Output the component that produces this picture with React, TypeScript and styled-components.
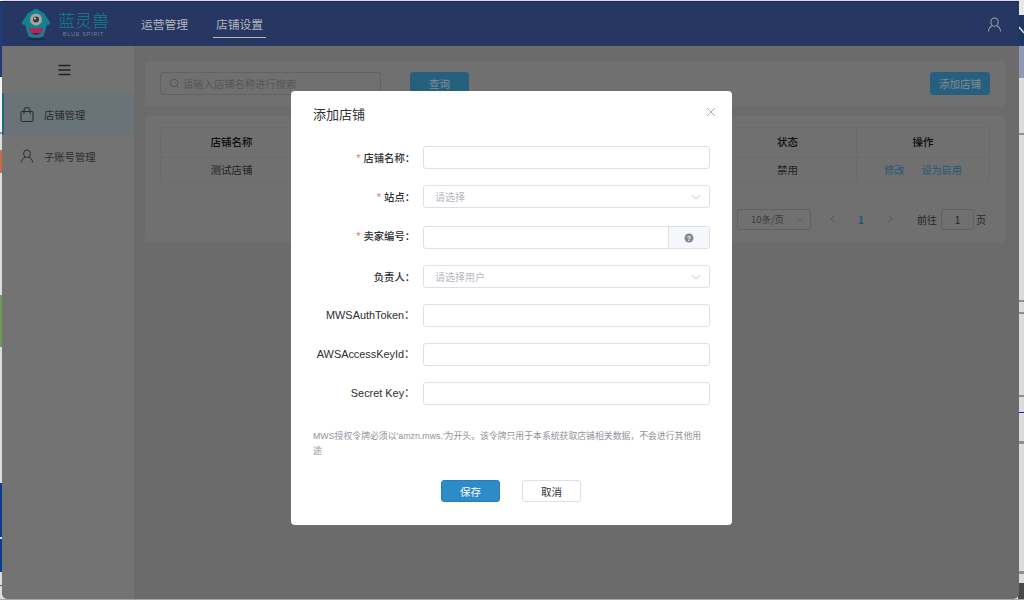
import React from "react";
import styled, { createGlobalStyle } from "styled-components";

const Global = createGlobalStyle`
  html, body { margin: 0; padding: 0; width: 1024px; height: 600px; overflow: hidden; background: #d8d8d8; }
  * { box-sizing: border-box; }
  body { font-family: "Liberation Sans", "Noto Sans CJK SC", sans-serif; }
`;

const Desktop = styled.div`
  position: relative;
  width: 1024px;
  height: 600px;
  overflow: hidden;
  background: #dcdcdc;
`;
const LeftStrip = styled.div`
  position: absolute;
  left: 0;
  width: 3px;
  top: ${p => p.$top}px;
  height: ${p => p.$h}px;
  background: ${p => p.$c};
`;
const RightStrip = styled.div`
  position: absolute;
  right: 0;
  width: 6px;
  top: ${p => p.$top}px;
  height: ${p => p.$h}px;
  background: ${p => p.$c};
`;
const RightGlyph = styled.svg`
  position: absolute;
  right: 0;
  top: 24px;
`;
const TopEdge = styled.div`
  position: absolute;
  left: 0;
  top: 1px;
  width: 1019px;
  height: 1px;
  background: #20245e;
`;
const BottomEdge = styled.div`
  position: absolute;
  left: 0;
  right: 0;
  bottom: 0;
  height: 1px;
  background: #a6a6a6;
`;
const Window = styled.div`
  position: absolute;
  left: 2px;
  top: 2px;
  width: 1017px;
  height: 597px;
  border-radius: 0 0 6px 6px;
  overflow: hidden;
  display: flex;
  flex-direction: column;
  background: #6b6b6b;
`;
const Header = styled.header`
  height: 44px;
  flex: none;
  background: #273763;
  display: flex;
  align-items: center;
  padding: 0 17px 0 19px;
`;
const Logo = styled.div`
  display: flex;
  align-items: center;
  width: 117px;
  gap: 7px;
`;
const LogoText = styled.div`
  display: flex;
  flex-direction: column;
  align-items: center;
  width: 51px;
  color: #12808f;
`;
const LogoCn = styled.div`
  font-size: 17px;
  line-height: 20px;
  font-family: "Noto Sans CJK SC", sans-serif;
  font-weight: 300;
`;
const LogoEn = styled.div`
  font-size: 5.5px;
  line-height: 7px;
  margin-top: 1px;
  letter-spacing: 0.7px;
  white-space: nowrap;
  color: #75819a;
`;
const TopNav = styled.nav`
  display: flex;
  gap: 22px;
  flex: 1;
  height: 100%;
`;
const TopItem = styled.div`
  font-size: 11.8px;
  width: 53px;
  height: 100%;
  display: flex;
  align-items: center;
  justify-content: center;
  padding-bottom: 2px;
  color: #b4b6bd;
  font-family: "Noto Sans CJK SC", sans-serif;
  position: relative;
  ${p => p.$active && `
    &::after {
      content: "";
      position: absolute;
      left: 0;
      right: 0;
      bottom: 8px;
      height: 1px;
      background: #b9b9b4;
    }
  `}
`;
const Body = styled.div`
  flex: 1;
  display: flex;
  min-height: 0;
`;
const Sidebar = styled.aside`
  width: 132px;
  flex: none;
  background: #737373;
  display: flex;
  flex-direction: column;
`;
const Burger = styled.div`
  height: 47px;
  display: flex;
  align-items: center;
  justify-content: center;
  padding: 1px 8px 0 0;
`;
const MenuItem = styled.div`
  height: 42px;
  display: flex;
  align-items: center;
  padding-left: 16px;
  gap: 10px;
  font-size: 10.3px;
  color: #2b2b2b;
  font-family: "Noto Sans CJK SC", sans-serif;
  background: ${p => (p.$active ? "#6a7378" : "transparent")};
  border-left: 2px solid ${p => (p.$active ? "#1d6686" : "transparent")};
`;
const Main = styled.main`
  flex: 1;
  padding: 15px 14px 0 11px;
  display: flex;
  flex-direction: column;
  gap: 10px;
`;
const SearchCard = styled.section`
  background: #707070;
  border-radius: 3px;
  padding: 0 15px;
  height: 45px;
  display: flex;
  align-items: center;
`;
const TableCard = styled.section`
  background: #707070;
  border-radius: 3px;
  padding: 11px 15px 0;
  height: 126px;
`;
const SearchBox = styled.div`
  width: 221px;
  height: 23px;
  border: 1px solid #626262;
  border-radius: 3px;
  display: flex;
  align-items: center;
  padding-left: 8px;
  gap: 3px;
  font-size: 10.3px;
  color: #565656;
  font-family: "Noto Sans CJK SC", sans-serif;
`;
const DimButton = styled.div`
  height: 23px;
  width: ${p => p.$w}px;
  border-radius: 3px;
  background: #27607f;
  color: #838c92;
  display: flex;
  align-items: center;
  justify-content: center;
  font-size: 10.5px;
  font-family: "Noto Sans CJK SC", sans-serif;
  margin-left: ${p => p.$ml || "0"};
`;
const Table = styled.div`
  display: grid;
  grid-template-columns: 142px 1fr 138px 132px;
  grid-template-rows: 30px 24px;
  width: 830px;
  border: 1px solid #6b6b6b;
  border-radius: 2px;
`;
const Cell = styled.div`
  display: flex;
  align-items: center;
  justify-content: center;
  font-size: ${p => (p.$links ? "10.1px" : "10.5px")};
  gap: 17px;
  padding-bottom: ${p => (p.$head ? "3px" : "1px")};
  color: ${p => (p.$head ? "#0c0c0c" : "#222")};
  font-weight: ${p => (p.$head ? 500 : 400)};
  font-family: "Noto Sans CJK SC", sans-serif;
  border-bottom: ${p => (p.$head ? "1px solid #6b6b6b" : "none")};
  border-right: ${p => (p.$last ? "none" : "1px solid #6b6b6b")};
`;
const TableLink = styled.span`
  color: #1d5a78;
`;
const Pager = styled.div`
  display: flex;
  align-items: center;
  justify-content: flex-end;
  height: 24px;
  margin-top: 24px;
  width: 830px;
  font-size: 10px;
  color: #262626;
  font-family: "Noto Sans CJK SC", sans-serif;
`;
const PageSize = styled.div`
  width: 74px;
  height: 21px;
  border: 1px solid #626262;
  border-radius: 3px;
  display: flex;
  align-items: center;
  justify-content: space-between;
  padding: 0 5px 0 13px;
  font-size: 9.4px;
  color: #3a3a3a;
  margin-right: 18px;
`;
const PageNum = styled.span`
  color: #1d5a78;
  font-weight: 700;
  margin: 0 22px 0 21px;
`;
const GoTo = styled.span`
  margin-left: 23px;
`;
const GoBox = styled.div`
  width: 33px;
  height: 21px;
  border: 1px solid #626262;
  border-radius: 3px;
  display: flex;
  align-items: center;
  justify-content: center;
  margin: 0 2px 0 4px;
`;
const PageEnd = styled.span`
  margin-right: 4px;
`;

const Modal = styled.div`
  position: absolute;
  left: 291px;
  top: 91px;
  width: 441px;
  height: 434px;
  background: #fff;
  border-radius: 4px;
  padding: 13px 22px 0;
  display: flex;
  flex-direction: column;
`;
const ModalHead = styled.div`
  display: flex;
  justify-content: space-between;
  align-items: flex-start;
  height: 42px;
`;
const ModalTitle = styled.h2`
  margin: 0;
  font-size: 13px;
  line-height: 20px;
  font-weight: 400;
  color: #303133;
  font-family: "Noto Sans CJK SC", sans-serif;
`;
const CloseBtn = styled.div`
  color: #9a9da3;
  margin: 3px -6px 0 0;
  display: flex;
`;
const Form = styled.div`
  display: flex;
  flex-direction: column;
  gap: 16px;
`;
const Row = styled.div`
  display: flex;
  align-items: center;
  margin-top: ${p => (p.$extra ? "2px" : "0")};
`;
const Label = styled.label`
  width: 102px;
  flex: none;
  text-align: right;
  margin-right: 8px;
  padding-bottom: ${p => (p.$lift ? "4px" : p.$latin ? "3px" : "0")};
  font-size: ${p => (p.$latin ? "10.9px" : "10.3px")};
  font-weight: 500;
  color: #2c2d30;
  white-space: nowrap;
`;
const Star = styled.span`
  color: #f56c6c;
  font-size: 11px;
  margin-right: 3px;
`;
const FieldBox = styled.div`
  width: 287px;
  height: 23px;
  border: 1px solid #dcdfe6;
  border-radius: 3px;
  display: flex;
  align-items: center;
  justify-content: space-between;
  padding-left: 11px;
  padding-right: 7px;
  font-size: 10px;
  color: #b5b8bf;
  font-family: "Noto Sans CJK SC", sans-serif;
`;
const AppendBox = styled.div`
  width: 287px;
  height: 23px;
  border: 1px solid #dcdfe6;
  border-radius: 3px;
  display: flex;
  justify-content: flex-end;
  overflow: hidden;
`;
const Append = styled.div`
  width: 41px;
  background: #f5f7fa;
  border-left: 1px solid #dcdfe6;
  display: flex;
  align-items: center;
  justify-content: center;
`;
const Hint = styled.p`
  margin: 24px 0 0;
  padding-right: 5px;
  font-size: 8.85px;
  line-height: 15px;
  color: #909399;
`;
const Actions = styled.div`
  display: flex;
  justify-content: center;
  gap: 22px;
  margin-top: 21px;
  padding-right: 1px;
`;
const Btn = styled.div`
  width: 59px;
  height: 22px;
  border-radius: 3px;
  display: flex;
  align-items: center;
  justify-content: center;
  font-size: 10.5px;
  font-family: "Noto Sans CJK SC", sans-serif;
  background: ${p => (p.$primary ? "#2d8cc8" : "#fff")};
  color: ${p => (p.$primary ? "#fff" : "#303133")};
  border: 1px solid ${p => (p.$primary ? "#2a7fb8" : "#dcdfe6")};
`;

const Chevron = ({ c = "#c0c4cc", s = 12 }: { c?: string; s?: number }) => (
  <svg width={s} height={s} viewBox="0 0 12 12" fill="none" stroke={c} strokeWidth="0.9">
    <path d="M2 4.200 6 8l4-3.800" />
  </svg>
);
const Person = ({ c, s }: { c: string; s: number }) => (
  <svg width={s} height={s} viewBox="0 0 16 16" fill="none" stroke={c} strokeWidth="1.100">
    <ellipse cx="8" cy="5.400" rx="3.900" ry="4.400" />
    <path d="M1.500 15.500c.4-3.600 2.800-5.800 4.300-6.200M14.500 15.500c-.4-3.600-2.800-5.800-4.300-6.200" />
  </svg>
);
const Bag = () => (
  <svg width="14" height="15" viewBox="0 0 14 15" fill="none" stroke="#2b2b2b" strokeWidth="1">
    <path d="M1.500 4.500h11a.5.5 0 0 1 .5.5v8.500a1 1 0 0 1-1 1H2a1 1 0 0 1-1-1V5a.5.5 0 0 1 .5-.5z" />
    <path d="M4 7V3a3 2.500 0 0 1 6 0v4" />
  </svg>
);
const Monster = () => (
  <svg width="30" height="33" viewBox="0 0 30 33">
    <ellipse cx="15" cy="31" rx="10" ry="1.400" fill="#1e2c50" />
    <path d="M15 1c2.500 0 3 1.600 5 2.400 2 .8 3.600 1.600 4.600 4.200.7 2 4 5 4.400 7.200.3 1.700-2.200 2.400-3.600 2.800-.4 3.600-1.600 8-3.400 10.600-1.800 2-12.200 2-14 0C6.200 25.600 5 21.200 4.600 17.600 3.200 17.200.7 16.500 1 14.800c.4-2.200 3.700-5.200 4.400-7.200 1-2.600 2.600-3.400 4.600-4.200C12 2.600 12.500 1 15 1z" fill="#177f90" />
    <circle cx="15" cy="11.600" r="6" fill="#a4a4a0" />
    <circle cx="15" cy="11.600" r="3" fill="#3a3a3a" />
    <circle cx="14" cy="10.600" r="1" fill="#d8d8d8" />
    <path d="M8 20h14c0 4-2.800 7-7 7s-7-3-7-7z" fill="#a62a5e" />
    <path d="M11 25.500c2-.9 6-.9 8 0-2 1.700-6 1.700-8 0z" fill="#5a1c4c" />
  </svg>
);

const fields: { label: string; req?: boolean; kind?: "select" | "append"; ph?: string; extra?: boolean; latin?: boolean }[] = [
  { label: "店铺名称：", req: true },
  { label: "站点：", req: true, kind: "select", ph: "请选择" },
  { label: "卖家编号：", req: true, kind: "append", extra: true },
  { label: "负责人：", kind: "select", ph: "请选择用户" },
  { label: "MWSAuthToken：", latin: true },
  { label: "AWSAccessKeyId：", latin: true },
  { label: "Secret Key：", latin: true },
];

const leftBits: [number, number, string][] = [
  [0, 1, "#ffffff"],
  [2, 75, "#1f3a78"],
  [77, 55, "#f4f4f4"],
  [132, 2, "#8f8f8f"],
  [150, 23, "#c9694a"],
  [295, 52, "#6f9a5c"],
  [483, 54, "#0b3d8e"],
  [539, 33, "#0b3d8e"],
  [585, 1, "#a83a3a"],
];
const rightBits: [number, number, string][] = [
  [0, 15, "#e8e8e8"],
  [15, 31, "#1f3565"],
  [46, 32, "#8f99b4"],
  [133, 2, "#8f8f8f"],
  [300, 2, "#8f8f8f"],
  [312, 2, "#8f8f8f"],
  [395, 2, "#8f8f8f"],
  [412, 1, "#1a237e"],
  [441, 3, "#8f8f8f"],
  [571, 3, "#8f8f8f"],
  [583, 17, "#4a4a4a"],
];

export default function App() {
  return (
    <Desktop>
      <Global />
      {leftBits.map(([t, h, c]) => (
        <LeftStrip key={t} $top={t} $h={h} $c={c} />
      ))}
      {rightBits.map(([t, h, c]) => (
        <RightStrip key={t} $top={t} $h={h} $c={c} />
      ))}
      <RightGlyph width="5" height="14" viewBox="0 0 5 14" fill="none" stroke="#d8dbe4" strokeWidth="1.500">
        <path d="M0 3 5 9" />
      </RightGlyph>
      <TopEdge />
      <BottomEdge />
      <Window>
        <Header>
          <Logo>
            <Monster />
            <LogoText>
              <LogoCn>蓝灵兽</LogoCn>
              <LogoEn>BLUE SPIRIT</LogoEn>
            </LogoText>
          </Logo>
          <TopNav>
            <TopItem>运营管理</TopItem>
            <TopItem $active>店铺设置</TopItem>
          </TopNav>
          <Person c="#9a9fad" s={15} />
        </Header>
        <Body>
          <Sidebar>
            <Burger>
              <svg width="13" height="12" viewBox="0 0 13 12" stroke="#222" strokeWidth="1.300">
                <path d="M.5 1.500h12M.5 6h12M.5 10.500h12" />
              </svg>
            </Burger>
            <MenuItem $active>
              <Bag />
              店铺管理
            </MenuItem>
            <MenuItem>
              <Person c="#2b2b2b" s={14} />
              子账号管理
            </MenuItem>
          </Sidebar>
          <Main>
            <SearchCard>
              <SearchBox>
                <svg width="11" height="11" viewBox="0 0 11 11" fill="none" stroke="#555" strokeWidth="0.900">
                  <circle cx="5" cy="5" r="3.800" />
                  <path d="M7.800 7.800 10 10" />
                </svg>
                请输入店铺名称进行搜索
              </SearchBox>
              <DimButton $w={59} $ml="29px">查询</DimButton>
              <DimButton $w={60} $ml="auto">添加店铺</DimButton>
            </SearchCard>
            <TableCard>
              <Table>
                <Cell $head>店铺名称</Cell>
                <Cell $head />
                <Cell $head>状态</Cell>
                <Cell $head $last>操作</Cell>
                <Cell>测试店铺</Cell>
                <Cell />
                <Cell>禁用</Cell>
                <Cell $last $links>
                  <TableLink>修改</TableLink>
                  <TableLink>设为启用</TableLink>
                </Cell>
              </Table>
              <Pager>
                <PageSize>
                  10条/页
                  <Chevron c="#565656" s={10} />
                </PageSize>
                <svg width="8" height="10" viewBox="0 0 8 10" fill="none" stroke="#565656"><path d="M5.500 1.500 2 5l3.500 3.500" /></svg>
                <PageNum>1</PageNum>
                <svg width="8" height="10" viewBox="0 0 8 10" fill="none" stroke="#565656"><path d="M2.500 1.500 6 5 2.500 8.500" /></svg>
                <GoTo>前往</GoTo>
                <GoBox>1</GoBox>
                <PageEnd>页</PageEnd>
              </Pager>
            </TableCard>
          </Main>
        </Body>
      </Window>
      <Modal>
        <ModalHead>
          <ModalTitle>添加店铺</ModalTitle>
          <CloseBtn>
            <svg width="10" height="10" viewBox="0 0 10 10" stroke="currentColor" strokeWidth="0.800">
              <path d="M1 1l8 8M9 1 1 9" />
            </svg>
          </CloseBtn>
        </ModalHead>
        <Form>
          {fields.map(f => (
            <Row key={f.label} $extra={f.extra}>
              <Label $latin={f.latin} $lift={f.extra}>
                {f.req && <Star>*</Star>}
                {f.label}
              </Label>
              {f.kind === "append" ? (
                <AppendBox>
                  <Append>
                    <svg width="10" height="10" viewBox="0 0 10 10">
                      <circle cx="5" cy="5" r="4.500" fill="#84878d" />
                      <text x="5" y="7.500" fontSize="7" fontWeight="700" textAnchor="middle" fill="#f5f7fa" fontFamily="Liberation Sans">?</text>
                    </svg>
                  </Append>
                </AppendBox>
              ) : (
                <FieldBox>
                  {f.ph}
                  {f.kind === "select" && <Chevron />}
                </FieldBox>
              )}
            </Row>
          ))}
        </Form>
        <Hint>MWS授权令牌必须以'amzn.mws.'为开头。该令牌只用于本系统获取店铺相关数据，不会进行其他用途</Hint>
        <Actions>
          <Btn $primary>保存</Btn>
          <Btn>取消</Btn>
        </Actions>
      </Modal>
    </Desktop>
  );
}
